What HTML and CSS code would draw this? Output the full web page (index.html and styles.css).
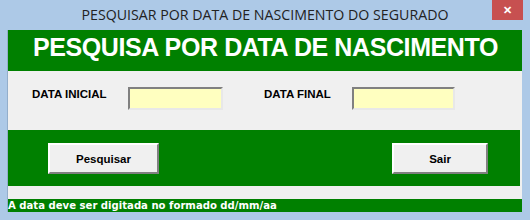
FILE: index.html
```html
<!DOCTYPE html>
<html>
<head>
    <meta charset="utf-8">
    <title>Pesquisar por data de nascimento do segurado</title>
    <link rel="stylesheet" href="styles.css">
</head>
<body>
    <div class="window">
        <div class="title-bar">
            <span class="title">PESQUISAR POR DATA DE NASCIMENTO DO SEGURADO</span>
            <span class="close-btn">&#x2715;</span>
        </div>
        <div class="client">
            <div class="header">PESQUISA POR DATA DE NASCIMENTO</div>
            <div class="form-row">
                <label class="label-ini" for="data-inicial">DATA INICIAL</label>
                <input type="text" id="data-inicial" class="field field-ini">
                <label class="label-fim" for="data-final">DATA FINAL</label>
                <input type="text" id="data-final" class="field field-fim">
            </div>
            <div class="actions">
                <button class="btn btn-search">Pesquisar</button>
                <button class="btn btn-exit">Sair</button>
            </div>
            <div class="status">A data deve ser digitada no formado dd/mm/aa</div>
        </div>
    </div>
</body>
</html>
```

FILE: styles.css
```css
body {
    margin: 0;
    font-family: "Liberation Sans", Arial, sans-serif;
}
.window {
    width: 530px;
    height: 220px;
    box-sizing: border-box;
    background: #adc9e7;
    padding: 0 8px 8px 8px;
    display: flex;
    flex-direction: column;
}
.title-bar {
    height: 30px;
    display: grid;
    grid-template-columns: 1fr auto 1fr;
    margin: 0 -8px;
}
.title {
    grid-column: 2;
    font-family: "Open Sans", sans-serif;
    font-size: 14.2px;
    color: #222;
    line-height: 29px;
}
.close-btn {
    grid-column: 3;
    justify-self: end;
    width: 31px;
    height: 20px;
    margin-right: 7px;
    background: #c75050;
    color: #fff;
    font-size: 11px;
    font-weight: bold;
    text-align: center;
    line-height: 20px;
}
.client {
    flex: 1;
    background: #f0f0f0;
    border-left: 1px solid #93aecb;
    margin-left: -1px;
    display: flex;
    flex-direction: column;
}
.header {
    height: 41px;
    background: #008000;
    color: #fff;
    font-weight: bold;
    font-size: 25px;
    letter-spacing: -0.4px;
    padding-left: 25px;
    line-height: 34px;
}
.form-row {
    height: 59px;
    display: flex;
    align-items: flex-start;
    padding-top: 16px;
    box-sizing: border-box;
}
.form-row label {
    font-weight: bold;
    font-size: 11.5px;
    color: #000;
    margin-top: 1px;
}
.label-ini {
    margin-left: 24px;
    width: 96px;
}
.label-fim {
    margin-left: 41px;
    width: 88px;
}
.field {
    height: 23px;
    box-sizing: border-box;
    background: #ffffc0;
    border: 2px solid;
    border-color: #808080 #e8e8e8 #e8e8e8 #808080;
    padding: 0;
}
.field-ini {
    width: 95px;
}
.field-fim {
    width: 103px;
}
.actions {
    height: 56px;
    width: 512px;
    background: #008000;
    display: flex;
    justify-content: space-between;
    align-items: flex-start;
    padding: 13px 32px 0 40px;
    box-sizing: border-box;
}
.btn {
    height: 31px;
    background: #f0f0f0;
    border: 2px solid;
    border-color: #fff #808080 #808080 #fff;
    font-family: "Liberation Sans", Arial, sans-serif;
    font-weight: bold;
    font-size: 11.5px;
    color: #000;
    padding: 0;
}
.btn-search {
    width: 111px;
}
.btn-exit {
    width: 96px;
}
.status {
    margin-top: 13px;
    height: 13px;
    background: #008000;
    color: #fff;
    font-family: "DejaVu Sans", sans-serif;
    font-weight: bold;
    font-size: 10.1px;
    line-height: 13px;
    white-space: nowrap;
}
```
